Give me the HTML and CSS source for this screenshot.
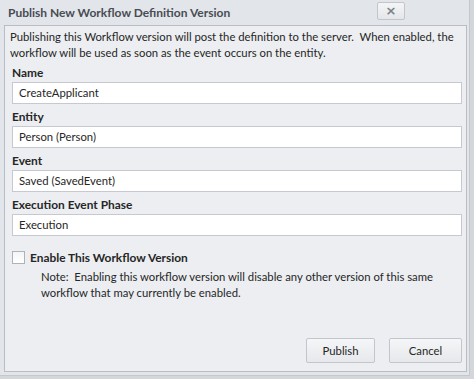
FILE: index.html
```html
<!DOCTYPE html>
<html lang="en">
<head>
    <meta charset="UTF-8">
    <title>Publish New Workflow Definition Version</title>
    <link rel="stylesheet" href="styles.css">
</head>
<body>
    <div class="window">
        <!-- Barra de título -->
        <div class="title-bar">
            <span class="title">Publish New Workflow Definition Version</span>
            <button class="close-btn" aria-label="Close">&times;</button>
        </div>

        <!-- Contenido -->
        <div class="panel">
            <p class="intro">Publishing this Workflow version will post the definition to the server.&nbsp; When enabled, the workflow will be used as soon as the event occurs on the entity.</p>

            <div class="field">
                <label class="field-label">Name</label>
                <div class="field-box">CreateApplicant</div>
            </div>
            <div class="field">
                <label class="field-label">Entity</label>
                <div class="field-box">Person (Person)</div>
            </div>
            <div class="field">
                <label class="field-label">Event</label>
                <div class="field-box">Saved (SavedEvent)</div>
            </div>
            <div class="field">
                <label class="field-label">Execution Event Phase</label>
                <div class="field-box">Execution</div>
            </div>

            <div class="check-row">
                <span class="checkbox"></span>
                <span class="check-label">Enable This Workflow Version</span>
            </div>
            <p class="note">Note:&nbsp; Enabling this workflow version will disable any other version of this same workflow that may currently be enabled.</p>

            <div class="actions">
                <button class="btn btn-publish">Publish</button>
                <button class="btn btn-cancel">Cancel</button>
            </div>
        </div>
    </div>
</body>
</html>
```

FILE: styles.css
```css
:root {
    --frame-color: #e2e5e9;
    --panel-color: #eceef1;
    --border-color: #b9bdc3;
    --text-color: #262626;
    --font-main: "Lato", "Open Sans", sans-serif;
    --font-size-base: 11.3px;
    --font-size-bold: 11.9px;
}

* {
    box-sizing: border-box;
}

body {
    margin: 0;
    background-color: #d3d6db;
    font-family: var(--font-main);
    font-size: var(--font-size-base);
    color: var(--text-color);
}

.window {
    width: 470px;
    height: 376px;
    background-color: var(--frame-color);
    border-right: 1px solid #c4c8cd;
    border-bottom: 1px solid #c4c8cd;
    padding: 0 2px 3px 4px;
    display: flex;
    flex-direction: column;
}

/* Barra de título */
.title-bar {
    height: 25px;
    display: flex;
    align-items: center;
    justify-content: space-between;
    padding: 0 62px 0 4px;
}

.title {
    font-weight: 700;
    font-size: 12px;
    color: #484c53;
}

.close-btn {
    width: 28px;
    height: 18px;
    margin-top: -4px;
    border: 1px solid #c2c6cc;
    border-radius: 2px;
    background: linear-gradient(#f4f5f7, #e4e6e9);
    color: #7c8087;
    font-family: "DejaVu Sans", sans-serif;
    font-size: 13px;
    font-weight: 700;
    line-height: 15px;
    padding: 0;
}

/* Panel */
.panel {
    flex: 1;
    background-color: var(--panel-color);
    border: 1px solid var(--border-color);
    padding: 3px 4px 8px 5px;
    display: flex;
    flex-direction: column;
}

.intro {
    margin: 0 0 1px;
    line-height: 16px;
}

.field {
    padding-left: 2px;
}

.field-label {
    display: block;
    font-weight: 700;
    font-size: var(--font-size-bold);
    line-height: 17px;
    height: 20px;
    padding-top: 2px;
}

.field-box {
    height: 22px;
    background-color: #fff;
    border: 1px solid #c6cad0;
    padding: 0 6px;
    line-height: 20px;
    margin-bottom: 2px;
}

.check-row {
    display: flex;
    align-items: center;
    gap: 5px;
    margin-top: 12px;
    padding-left: 2px;
}

.checkbox {
    width: 13px;
    height: 13px;
    background: linear-gradient(#f4f5f7, #fff);
    border: 1px solid #aeb3b9;
}

.check-label {
    font-weight: 700;
    font-size: var(--font-size-bold);
}

.note {
    margin: 4px 0 0 31px;
    line-height: 16px;
}

.actions {
    margin-top: auto;
    display: flex;
    justify-content: flex-end;
    gap: 14px;
}

.btn {
    height: 25px;
    border: 1px solid #c2c6cc;
    border-radius: 2px;
    background: linear-gradient(#f5f6f8, #e6e8eb);
    font-family: var(--font-main);
    font-size: var(--font-size-base);
    color: var(--text-color);
}

.btn-publish {
    width: 69px;
}

.btn-cancel {
    width: 73px;
}
```
